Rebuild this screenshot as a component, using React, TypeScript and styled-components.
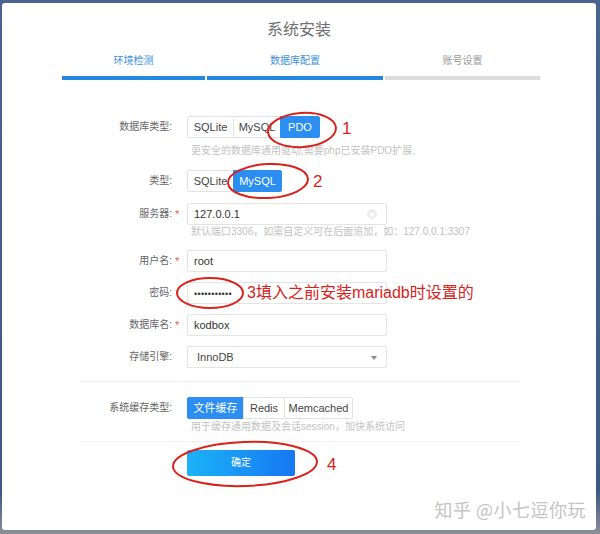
import React from "react";
import styled, { createGlobalStyle } from "styled-components";

const RED = "#d8231c";
const BLUE = "#2b8ef0";

const GlobalStyle = createGlobalStyle`
  html, body { margin: 0; padding: 0; }
  body {
    width: 600px;
    height: 534px;
    overflow: hidden;
    background: linear-gradient(#4a6390, #3f5784 92%, #8c9097);
    font-family: "Liberation Sans", "Noto Sans CJK SC", sans-serif;
  }
`;

const Panel = styled.div`
  position: relative;
  margin: 3px 4px 0 2px;
  height: 527px;
  background: #fff;
  border-radius: 3px;
`;

const Title = styled.h1`
  margin: 0;
  padding-top: 17px;
  font-size: 16px;
  line-height: 20px;
  font-weight: normal;
  color: #707070;
  text-align: center;
`;

const Steps = styled.div`
  display: flex;
  gap: 2px;
  width: 478px;
  margin: 14px 0 0 60px;
`;

const Step = styled.div<{ $w: number; $done: boolean }>`
  width: ${({ $w }) => $w}px;
  text-align: center;
  font-size: 10px;
  line-height: 14px;
  color: ${({ $done }) => ($done ? "#3d8fdc" : "#999")};

  &::after {
    content: "";
    display: block;
    height: 4px;
    margin-top: 8px;
    background: ${({ $done }) => ($done ? "#2388e2" : "#dcdcdc")};
  }
`;

const Form = styled.div`
  margin-top: 36px;
`;

const Row = styled.div<{ $mb: number }>`
  display: flex;
  align-items: flex-start;
  margin-bottom: ${({ $mb }) => $mb}px;
`;

const Label = styled.div`
  width: 170px;
  text-align: right;
  font-size: 10px;
  line-height: 22px;
  color: #666;
  white-space: nowrap;
`;

const Star = styled.span`
  width: 15px;
  padding-left: 3px;
  box-sizing: border-box;
  font-size: 11px;
  line-height: 22px;
  color: #e25b4f;
`;

const Cell = styled.div`
  position: relative;
  display: flex;
  flex-direction: column;
`;

const Group = styled.div`
  display: flex;
`;

const Seg = styled.div<{ $on?: boolean; $w: number }>`
  width: ${({ $w }) => $w}px;
  height: 22px;
  font-size: 11px;
  line-height: 20px;
  text-align: center;
  border: 1px solid ${({ $on }) => ($on ? BLUE : "#e2e2e2")};
  margin-left: -1px;
  background: ${({ $on }) => ($on ? BLUE : "#fff")};
  color: ${({ $on }) => ($on ? "#fff" : "#444")};
  box-sizing: border-box;
  white-space: nowrap;

  &:first-child {
    margin-left: 0;
    border-radius: 2px 0 0 2px;
  }
  &:last-child {
    border-radius: 0 2px 2px 0;
  }
`;

const Hint = styled.div<{ $mt: number }>`
  margin-top: ${({ $mt }) => $mt}px;
  padding-left: 4px;
  font-size: 10px;
  line-height: 14px;
  color: #c2c2c2;
  white-space: nowrap;
`;

const Field = styled.div`
  position: relative;
  width: 200px;
  height: 22px;
  padding: 0 6px;
  box-sizing: border-box;
  border: 1px solid #e4e4e4;
  border-radius: 2px;
  font-size: 11px;
  line-height: 20px;
  color: #333;
`;

const Dots = styled.span`
  font-size: 9px;
  letter-spacing: 0.3px;
  color: #333;
`;

const Clear = styled.span`
  position: absolute;
  right: 9px;
  top: 5px;
  width: 10px;
  height: 10px;
  border-radius: 50%;
  background: #ececec;

  &::before,
  &::after {
    content: "";
    position: absolute;
    left: 2px;
    top: 4.5px;
    width: 6px;
    height: 1px;
    background: #fff;
    transform: rotate(45deg);
  }
  &::after {
    transform: rotate(-45deg);
  }
`;

const SelectBox = styled(Field)`
  padding-left: 9px;
  color: #444;

  &::after {
    content: "";
    position: absolute;
    right: 9px;
    top: 9px;
    border-left: 3px solid transparent;
    border-right: 3px solid transparent;
    border-top: 4px solid #888;
  }
`;

const Divider = styled.div<{ $mt: number; $mb: number }>`
  height: 1px;
  margin: ${({ $mt, $mb }) => `${$mt}px 76px ${$mb}px 78px`};
  background: #f0f0f0;
`;

const Submit = styled.div`
  width: 108px;
  height: 26px;
  border-radius: 2px;
  background: linear-gradient(90deg, #1bb3f7, #1677f2);
  color: #fff;
  font-size: 10px;
  line-height: 26px;
  text-align: center;
`;

const RingSvg = styled.svg`
  position: absolute;
  overflow: visible;
  pointer-events: none;
`;

const Note = styled.span<{ $x: number; $y: number; $size: number }>`
  position: absolute;
  left: ${({ $x }) => $x}px;
  top: ${({ $y }) => $y}px;
  font-size: ${({ $size }) => $size}px;
  line-height: 20px;
  color: ${RED};
  white-space: nowrap;
  font-family: "Liberation Sans", "Noto Sans CJK SC", sans-serif;
`;

const Watermark = styled.div`
  position: absolute;
  right: 10px;
  bottom: 10px;
  font-size: 18px;
  line-height: 22px;
  color: #c4c4c4;
  font-family: "Noto Sans CJK SC", sans-serif;
  letter-spacing: 0.5px;
`;

type RingProps = { cx: number; cy: number; rx: number; ry: number; tilt?: number };

const Ring = ({ cx, cy, rx, ry, tilt = 0 }: RingProps) => (
  <RingSvg
    width={rx * 2 + 4}
    height={ry * 2 + 4}
    style={{ left: cx - rx - 2, top: cy - ry - 2 }}
  >
    <ellipse
      cx={rx + 2}
      cy={ry + 2}
      rx={rx}
      ry={ry}
      fill="none"
      stroke={RED}
      strokeWidth={2}
      transform={`rotate(${tilt} ${rx + 2} ${ry + 2})`}
    />
  </RingSvg>
);

const steps = [
  { name: "环境检测", w: 143, done: true },
  { name: "数据库配置", w: 176, done: true },
  { name: "账号设置", w: 155, done: false },
];

export default function App() {
  return (
    <>
      <GlobalStyle />
      <Panel>
        <Title>系统安装</Title>
        <Steps>
          {steps.map((s) => (
            <Step key={s.name} $w={s.w} $done={s.done}>
              {s.name}
            </Step>
          ))}
        </Steps>

        <Form>
          <Row $mb={12}>
            <Label>数据库类型:</Label>
            <Star />
            <Cell>
              <Group>
                <Seg $w={47}>SQLite</Seg>
                <Seg $w={48}>MySQL</Seg>
                <Seg $w={40} $on>PDO</Seg>
              </Group>
              <Hint $mt={6}>更安全的数据库通用驱动,需要php已安装PDO扩展.</Hint>
              <Ring cx={115} cy={14} rx={34} ry={17} tilt={-4} />
              <Note $x={155} $y={3} $size={17}>1</Note>
            </Cell>
          </Row>

          <Row $mb={11}>
            <Label>类型:</Label>
            <Star />
            <Cell>
              <Group>
                <Seg $w={47}>SQLite</Seg>
                <Seg $w={49} $on>MySQL</Seg>
              </Group>
              <Ring cx={81} cy={11} rx={40} ry={17} tilt={-3} />
              <Note $x={126} $y={2} $size={17}>2</Note>
            </Cell>
          </Row>

          <Row $mb={11}>
            <Label>服务器:</Label>
            <Star>*</Star>
            <Cell>
              <Field>
                127.0.0.1
                <Clear />
              </Field>
              <Hint $mt={0}>默认端口3306，如需自定义可在后面追加，如：127.0.0.1:3307</Hint>
            </Cell>
          </Row>

          <Row $mb={10}>
            <Label>用户名:</Label>
            <Star>*</Star>
            <Cell>
              <Field>root</Field>
            </Cell>
          </Row>

          <Row $mb={10}>
            <Label>密码:</Label>
            <Star />
            <Cell>
              <Field>
                <Dots>•••••••••••</Dots>
              </Field>
              <Ring cx={23} cy={11} rx={33} ry={15} />
              <Note $x={60} $y={1} $size={16}>3填入之前安装mariadb时设置的</Note>
            </Cell>
          </Row>

          <Row $mb={10}>
            <Label>数据库名:</Label>
            <Star>*</Star>
            <Cell>
              <Field>kodbox</Field>
            </Cell>
          </Row>

          <Row $mb={0}>
            <Label>存储引擎:</Label>
            <Star />
            <Cell>
              <SelectBox>InnoDB</SelectBox>
            </Cell>
          </Row>

          <Divider $mt={13} $mb={15} />

          <Row $mb={0}>
            <Label>系统缓存类型:</Label>
            <Star />
            <Cell>
              <Group>
                <Seg $w={57} $on>文件缓存</Seg>
                <Seg $w={42}>Redis</Seg>
                <Seg $w={69}>Memcached</Seg>
              </Group>
              <Hint $mt={1}>用于缓存通用数据及会话session，加快系统访问</Hint>
            </Cell>
          </Row>

          <Divider $mt={7} $mb={8} />

          <Row $mb={0}>
            <Label />
            <Star />
            <Cell>
              <Submit>确定</Submit>
              <Ring cx={58} cy={14} rx={72} ry={22} tilt={-2} />
              <Note $x={140} $y={5} $size={17}>4</Note>
            </Cell>
          </Row>
        </Form>

        <Watermark>知乎 @小七逗你玩</Watermark>
      </Panel>
    </>
  );
}
